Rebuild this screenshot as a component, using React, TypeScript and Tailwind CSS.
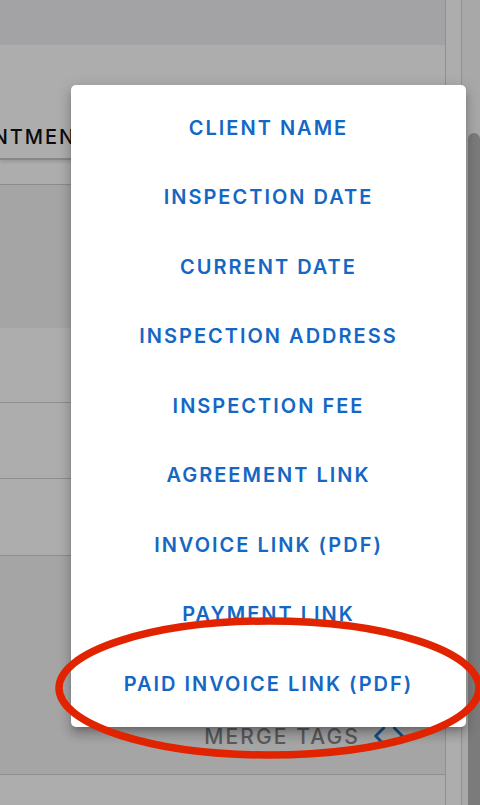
import { Code } from 'lucide-react';

const mergeTags = [
    'CLIENT NAME',
    'INSPECTION DATE',
    'CURRENT DATE',
    'INSPECTION ADDRESS',
    'INSPECTION FEE',
    'AGREEMENT LINK',
    'INVOICE LINK (PDF)',
    'PAYMENT LINK',
    'PAID INVOICE LINK (PDF)',
];

const font = { fontFamily: 'Inter, "Liberation Sans", sans-serif' };

export default function App() {
    return (
        <div className="relative w-[480px] h-[805px] overflow-hidden bg-white" style={font}>
            {/* Page behind the menu */}
            <div className="flex h-full">
                <div className="flex-1 flex flex-col">
                    <div className="h-[45px] bg-[#f1f1f3]" />
                    <div className="h-[70px]" />

                    {/* Tabs, scrolled sideways */}
                    <div className="h-[45px] overflow-hidden border-b-2 border-[#c9c9c9] shadow-[0_2px_3px_rgba(0,0,0,0.12)]">
                        <div className="flex items-center h-full -ml-[78px] gap-10">
                            <span className="text-[20px] font-medium tracking-[0.1em] text-[#111]">APPOINTMENTS</span>
                            <span className="text-[20px] font-medium tracking-[0.1em] text-[#111]">EMAILS</span>
                        </div>
                    </div>
                    <div className="h-[25px] border-b border-[#cfcfcf]" />
                    <div className="h-[143px] bg-[#f3f3f3]" />
                    <div className="h-[75px] border-b border-[#d2d2d2]" />
                    <div className="h-[76px] border-b border-[#d2d2d2]" />
                    <div className="h-[77px] border-b border-[#d2d2d2]" />

                    {/* Message body */}
                    <div className="h-[219px] bg-[#f3f3f3] border-b border-[#d2d2d2] flex items-end justify-end pr-[40px] pb-[22px]">
                        <button className="flex items-center gap-[13px]">
                            <span className="text-[21px] font-medium tracking-[0.1em] text-[#858589] leading-none">MERGE TAGS</span>
                            <Code className="w-[32px] h-[32px] text-[#1976d2]" strokeWidth={2.2} />
                        </button>
                    </div>
                    <div className="flex-1" />
                </div>

                {/* Side column and scrollbar */}
                <div className="w-[17px] border-l border-r border-[#d4d4d4] bg-white" />
                <div className="w-[18px] bg-[#f8f8f8] flex flex-col">
                    <div className="mt-[133px] ml-auto w-[12px] flex-1 rounded-t-[6px] bg-[#b6b6b6]" />
                </div>
            </div>

            {/* Backdrop */}
            <div className="absolute inset-0 bg-black/[0.32]" />

            {/* Merge tag menu */}
            <div className="absolute left-[71px] top-[85px] w-[395px] py-2 bg-white rounded-[5px] shadow-[0_5px_5px_-3px_rgba(0,0,0,0.2),0_8px_10px_1px_rgba(0,0,0,0.14),0_3px_14px_2px_rgba(0,0,0,0.12)]">
                {mergeTags.map((tag) => (
                    <div key={tag} className="h-[69.5px] flex items-center justify-center">
                        <span className="text-[20px] font-semibold tracking-[0.1em] text-[#1467c4]">{tag}</span>
                    </div>
                ))}
            </div>

            {/* Red marker circle */}
            <svg className="absolute inset-0 pointer-events-none" width="480" height="805" viewBox="0 0 480 805">
                <ellipse cx="269" cy="688" rx="210" ry="67" fill="none" stroke="#e12300" strokeWidth="7.5" />
            </svg>
        </div>
    );
}
